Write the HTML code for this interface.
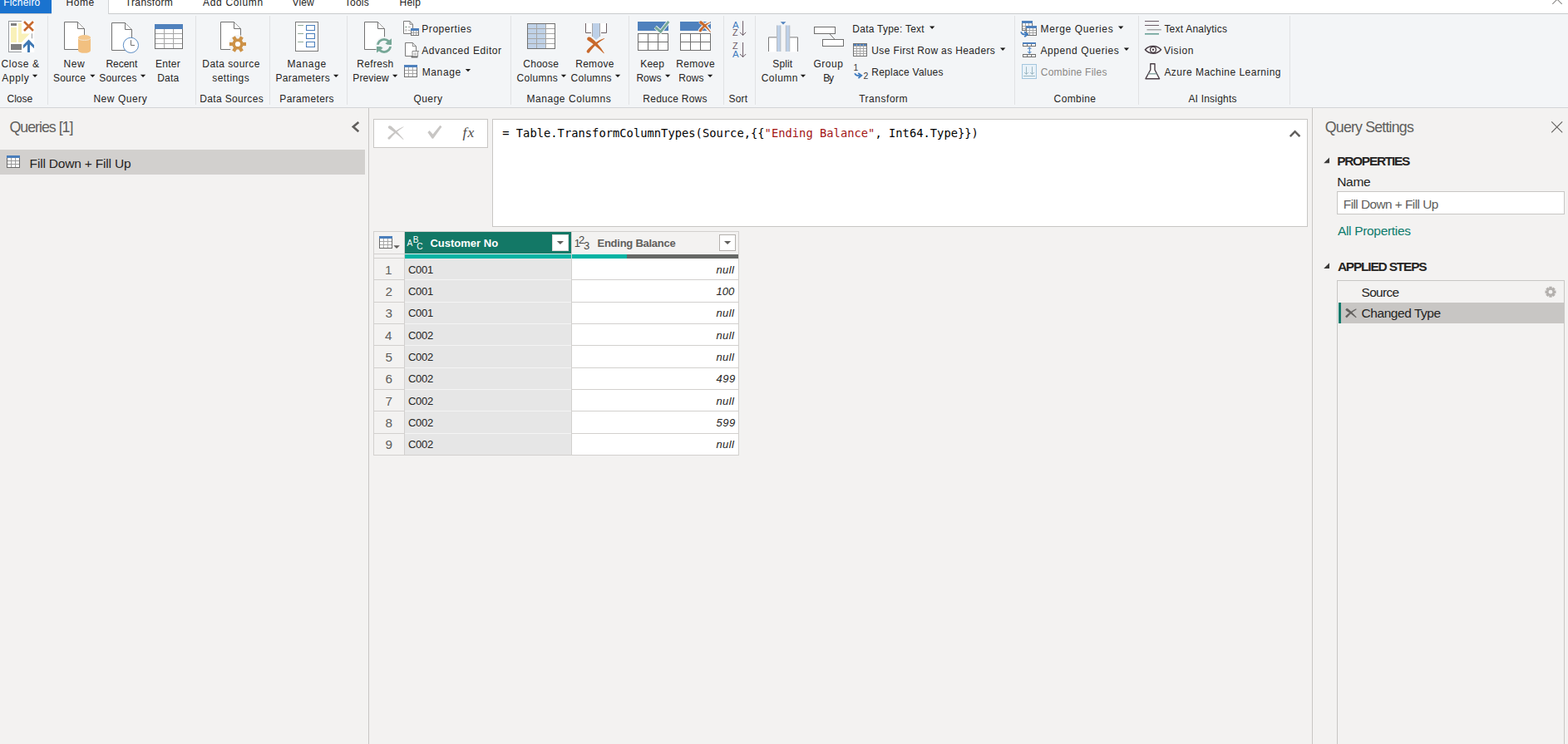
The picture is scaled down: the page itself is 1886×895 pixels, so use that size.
<!DOCTYPE html>
<html lang="en">
<head>
<meta charset="utf-8">
<title>Power Query Editor</title>
<style>
html,body{margin:0;padding:0;}
body{width:1886px;height:895px;overflow:hidden;background:#f3f2f1;font-family:"Liberation Sans",sans-serif;}
#app{position:relative;width:1886px;height:895px;overflow:hidden;background:#f3f2f1;}
.b{position:absolute;box-sizing:border-box;}
.t{position:absolute;white-space:pre;line-height:20px;height:20px;}
svg{position:absolute;overflow:visible;}
.sep{position:absolute;top:19px;width:1px;height:107px;background:#e1e2e4;}
.arr{position:absolute;width:0;height:0;border-left:3px solid transparent;border-right:3px solid transparent;border-top:3.4px solid #1b1a19;}
</style>
</head>
<body>
<div id="app">
<!-- tab strip -->
<div class="b" style="left:0;top:0;width:1886px;height:17px;background:#fff;border-bottom:1px solid #c9cbcd;"></div>
<div class="b" style="left:0;top:17px;width:1886px;height:113px;background:#f3f5f7;border-bottom:1px solid #d3d5d7;"></div>
<div class="b" style="left:0;top:0;width:62px;height:16px;background:#1a73cf;"></div>
<div class="b" style="left:62px;top:0;width:69px;height:17px;background:#f3f5f7;border-right:1px solid #d0d2d4;"></div>
<!-- group separators -->
<div class="sep" style="left:57px"></div>
<div class="sep" style="left:235px"></div>
<div class="sep" style="left:324px"></div>
<div class="sep" style="left:417px"></div>
<div class="sep" style="left:614px"></div>
<div class="sep" style="left:756px"></div>
<div class="sep" style="left:870px"></div>
<div class="sep" style="left:908px"></div>
<div class="sep" style="left:1220px"></div>
<div class="sep" style="left:1369px"></div>
<div class="sep" style="left:1551px"></div>
<!-- panels -->
<div class="b" style="left:443px;top:130px;width:1px;height:765px;background:#c8c6c4;"></div>
<div class="b" style="left:1578px;top:130px;width:1px;height:765px;background:#c8c6c4;"></div>
<div class="b" style="left:0;top:180px;width:439px;height:30px;background:#d2d0ce;"></div>
<!-- formula bar -->
<div class="b" style="left:449px;top:143px;width:138px;height:35px;background:#fff;border:1px solid #c8c6c4;"></div>
<div class="b" style="left:592px;top:143px;width:981px;height:130px;background:#fff;border:1px solid #c8c6c4;"></div>
<!-- right panel -->
<div class="b" style="left:1608px;top:230px;width:274px;height:28px;background:#fff;border:1px solid #c8c6c4;"></div>
<div class="b" style="left:1608px;top:337px;width:274px;height:600px;border:1px solid #c8c6c4;"></div>
<div class="b" style="left:1610px;top:364px;width:271.5px;height:25px;background:#c8c6c4;border-left:3px solid #0e7b6c;"></div>
<!-- data table -->
<div class="b" style="left:449px;top:278px;width:440px;height:270px;background:#d2d0ce;"></div>
<div class="b" style="left:450px;top:279px;width:36px;height:26px;background:#f3f2f1;"></div>
<div class="b" style="left:487px;top:279px;width:200px;height:26px;background:#137866;"></div>
<div class="b" style="left:688px;top:279px;width:200px;height:26px;background:#f3f2f1;"></div>
<div class="b" style="left:450px;top:306px;width:36px;height:4px;background:#f3f2f1;"></div>
<div class="b" style="left:487px;top:305px;width:200px;height:1px;background:#e8f1ef;"></div>
<div class="b" style="left:487px;top:306px;width:200px;height:5px;background:#01b3a3;"></div>
<div class="b" style="left:688px;top:305px;width:200px;height:1px;background:#f3f2f1;"></div>
<div class="b" style="left:688px;top:306px;width:66px;height:5px;background:#01b3a3;"></div>
<div class="b" style="left:754px;top:306px;width:134px;height:5px;background:#666866;"></div>
<div class="b" style="left:450px;top:311px;width:36px;height:25px;background:#f3f2f1;"></div>
<div class="b" style="left:487px;top:311px;width:200px;height:26px;background:#e6e6e6;border-bottom:1px solid #f4f4f4;"></div>
<div class="b" style="left:688px;top:311px;width:200px;height:25px;background:#fff;"></div>
<div class="b" style="left:450px;top:337px;width:36px;height:26px;background:#f3f2f1;"></div>
<div class="b" style="left:487px;top:337px;width:200px;height:27px;background:#e6e6e6;border-bottom:1px solid #f4f4f4;"></div>
<div class="b" style="left:688px;top:337px;width:200px;height:26px;background:#fff;"></div>
<div class="b" style="left:450px;top:364px;width:36px;height:25px;background:#f3f2f1;"></div>
<div class="b" style="left:487px;top:364px;width:200px;height:26px;background:#e6e6e6;border-bottom:1px solid #f4f4f4;"></div>
<div class="b" style="left:688px;top:364px;width:200px;height:25px;background:#fff;"></div>
<div class="b" style="left:450px;top:390px;width:36px;height:25px;background:#f3f2f1;"></div>
<div class="b" style="left:487px;top:390px;width:200px;height:26px;background:#e6e6e6;border-bottom:1px solid #f4f4f4;"></div>
<div class="b" style="left:688px;top:390px;width:200px;height:25px;background:#fff;"></div>
<div class="b" style="left:450px;top:416px;width:36px;height:26px;background:#f3f2f1;"></div>
<div class="b" style="left:487px;top:416px;width:200px;height:27px;background:#e6e6e6;border-bottom:1px solid #f4f4f4;"></div>
<div class="b" style="left:688px;top:416px;width:200px;height:26px;background:#fff;"></div>
<div class="b" style="left:450px;top:443px;width:36px;height:25px;background:#f3f2f1;"></div>
<div class="b" style="left:487px;top:443px;width:200px;height:26px;background:#e6e6e6;border-bottom:1px solid #f4f4f4;"></div>
<div class="b" style="left:688px;top:443px;width:200px;height:25px;background:#fff;"></div>
<div class="b" style="left:450px;top:469px;width:36px;height:25px;background:#f3f2f1;"></div>
<div class="b" style="left:487px;top:469px;width:200px;height:26px;background:#e6e6e6;border-bottom:1px solid #f4f4f4;"></div>
<div class="b" style="left:688px;top:469px;width:200px;height:25px;background:#fff;"></div>
<div class="b" style="left:450px;top:495px;width:36px;height:26px;background:#f3f2f1;"></div>
<div class="b" style="left:487px;top:495px;width:200px;height:27px;background:#e6e6e6;border-bottom:1px solid #f4f4f4;"></div>
<div class="b" style="left:688px;top:495px;width:200px;height:26px;background:#fff;"></div>
<div class="b" style="left:450px;top:522px;width:36px;height:25px;background:#f3f2f1;"></div>
<div class="b" style="left:487px;top:522px;width:200px;height:25px;background:#e6e6e6;border-bottom:0px solid #f4f4f4;"></div>
<div class="b" style="left:688px;top:522px;width:200px;height:25px;background:#fff;"></div>
<div class="b" style="left:664px;top:282px;width:20px;height:20px;background:#fff;border:1px solid #e3d9d9;"></div>
<div class="b" style="left:865px;top:282px;width:20px;height:20px;background:#fff;border:1px solid #b3b0ad;"></div>
<!-- dropdown arrows -->
<svg width="1886" height="895" viewBox="0 0 1886 895" style="left:0;top:0;">
<path d="M38.9 89.8 h6.3 l-3.15 3.3 Z" fill="#1b1a19"/>
<path d="M108.2 89.8 h6.3 l-3.15 3.3 Z" fill="#1b1a19"/>
<path d="M168.9 89.8 h6.3 l-3.15 3.3 Z" fill="#1b1a19"/>
<path d="M401.0 89.8 h6.3 l-3.15 3.3 Z" fill="#1b1a19"/>
<path d="M472.0 89.8 h6.3 l-3.15 3.3 Z" fill="#1b1a19"/>
<path d="M559.8 83.0 h6.3 l-3.15 3.3 Z" fill="#1b1a19"/>
<path d="M674.8 89.8 h6.3 l-3.15 3.3 Z" fill="#1b1a19"/>
<path d="M739.9 89.8 h6.3 l-3.15 3.3 Z" fill="#1b1a19"/>
<path d="M800.0 89.8 h6.3 l-3.15 3.3 Z" fill="#1b1a19"/>
<path d="M851.0 89.8 h6.3 l-3.15 3.3 Z" fill="#1b1a19"/>
<path d="M962.8 89.8 h6.3 l-3.15 3.3 Z" fill="#1b1a19"/>
<path d="M1118.0 31.6 h6.3 l-3.15 3.3 Z" fill="#1b1a19"/>
<path d="M1203.0 57.6 h6.3 l-3.15 3.3 Z" fill="#1b1a19"/>
<path d="M1345.0 31.6 h6.3 l-3.15 3.3 Z" fill="#1b1a19"/>
<path d="M1351.8 57.6 h6.3 l-3.15 3.3 Z" fill="#1b1a19"/>
<path d="M473.3 295.3 h7.6 l-3.80 3.7 Z" fill="#605e5c"/>
<path d="M669.8 290.0 h8.2 l-4.10 4.1 Z" fill="#605e5c"/>
<path d="M871.0 290.0 h8.2 l-4.10 4.1 Z" fill="#605e5c"/>
</svg>
<!-- table header arrows -->
<!-- table corner icon -->
<svg width="20" height="18" style="left:455px;top:283px" viewBox="455 283 20 18" shape-rendering="crispEdges">
  <rect x="456" y="284" width="16" height="15" fill="#fff"/>
  <rect x="456" y="284" width="16" height="3" fill="#4a7ebb"/>
  <path d="M461.500 287 V298 M466.500 287 V298 M457 290.500 H471 M457 294.500 H471" stroke="#a6a6a6" stroke-width="1"/>
  <path d="M456.500 287 V298.500 H471.500 V287" stroke="#6a6a6a" stroke-width="1" fill="none"/>
</svg>
<!-- formula text -->
<div class="t" style="left:604.2px;top:150.3px;font-family:'DejaVu Sans Mono','Liberation Mono',monospace;font-size:13.75px;letter-spacing:0.022px;color:#000;">= Table.TransformColumnTypes(Source,{{<span style="color:#a31515">"Ending Balance"</span>, Int64.Type}})</div>
<!-- ICONS overlay -->
<svg width="1886" height="895" viewBox="0 0 1886 895" style="left:0;top:0;">
<!-- top right chevron -->
<path d="M1867.3 4.8 L1873 -0.8 L1878.7 4.8" fill="none" stroke="#8a8886" stroke-width="1.1"/>

<!-- Close & Apply -->
<g>
  <rect x="10.5" y="25.5" width="30" height="37" fill="#fff" stroke="#979b9f" stroke-width="1"/>
  <rect x="13" y="28" width="7" height="3" fill="#808080"/>
  <rect x="13" y="33" width="7" height="18" fill="#f9f1b9"/>
  <path d="M22 28 H36.3 V40.5 L26.5 51 H22 Z" fill="#f9f1b9"/>
  <rect x="13" y="53" width="13" height="7" fill="#808080"/>
  <rect x="26" y="25" width="15.3" height="15.5" fill="#fff"/>
  <path d="M26 63 V51 L36.3 40 H41.3 V63 Z" fill="#fff"/>
  <path d="M38.4 40.3 V46.3" stroke="#979b9f" stroke-width="1" fill="none"/>
  <path d="M29 26 L40 37 M40 26 L29 37" stroke="#c7692f" stroke-width="2.6" fill="none"/>
  <path d="M33 63 V53.5 L28 58.2 V54.2 L34.5 47.6 L41 54.2 V58.2 L36 53.5 V63 Z" fill="#3e78b4"/>
</g>

<!-- New Source -->
<g>
  <path d="M93.5 26.5 H77.5 V59.5 H101.5 V34.5" fill="#fff" stroke="#727272" stroke-width="1"/>
  <path d="M93.5 26.5 L101.5 34.5" fill="none" stroke="#7d7d7d" stroke-width="0.75"/>
  <path d="M93.5 26.5 V34.5 H101.5" fill="none" stroke="#727272" stroke-width="1"/>
  <path d="M94 45 V60.8 A7.5 3 0 0 0 109 60.8 V45 Z" fill="#f2c080"/>
  <ellipse cx="101.5" cy="45" rx="7.5" ry="3" fill="#f4c88e"/>
  <path d="M94.3 46.2 A7.3 2.6 0 0 0 108.7 46.2" fill="none" stroke="#f3ede4" stroke-width="0.9"/>
</g>

<!-- Recent Sources -->
<g>
  <path d="M150.5 27.5 H134.5 V60.5 H158.5 V35.5" fill="#fff" stroke="#727272" stroke-width="1"/>
  <path d="M150.5 27.5 L158.5 35.5" fill="none" stroke="#7d7d7d" stroke-width="0.75"/>
  <path d="M150.5 27.5 V35.5 H158.5" fill="none" stroke="#727272" stroke-width="1"/>
  <circle cx="157.4" cy="54.4" r="9.1" fill="#fff" stroke="#4a80bd" stroke-width="0.9"/>
  <path d="M157.5 48.2 V54.5 H162" fill="none" stroke="#727272" stroke-width="1"/>
</g>

<!-- Enter Data -->
<g shape-rendering="crispEdges">
  <rect x="186" y="29" width="34" height="30" fill="#fff"/>
  <rect x="186" y="29" width="34" height="6" fill="#4f81bd"/>
  <path d="M187 40.5 H219 M187 46.5 H219 M187 52.5 H219 M197.5 35 V58 M208.5 35 V58" stroke="#a6a6a6" stroke-width="1" fill="none"/>
  <path d="M186.5 35 V58.5 H219.5 V35" stroke="#6e6e6e" stroke-width="1" fill="none"/>
</g>

<!-- Data source settings -->
<g>
  <path d="M281.5 26.5 H265.5 V59.5 H289.5 V34.5" fill="#fff" stroke="#727272" stroke-width="1"/>
  <path d="M281.5 26.5 L289.5 34.5" fill="none" stroke="#7d7d7d" stroke-width="0.75"/>
  <path d="M281.5 26.5 V34.5 H289.5" fill="none" stroke="#727272" stroke-width="1"/>
  <circle cx="286" cy="53" r="11" fill="#f3f5f7"/>
  <rect x="275" y="42" width="15" height="18" fill="none"/>
  <g transform="translate(286 53)" fill="#cd9247">
    <circle r="6.6"/>
    <rect x="-2.1" y="-10" width="4.2" height="20" transform="rotate(30)"/>
    <rect x="-2.1" y="-10" width="4.2" height="20" transform="rotate(90)"/>
    <rect x="-2.1" y="-10" width="4.2" height="20" transform="rotate(150)"/>
    <circle r="3.1" fill="#fff"/>
  </g>
</g>

<!-- Manage Parameters -->
<g>
  <rect x="355.5" y="26.5" width="27" height="35" fill="#fff" stroke="#7a7a7a" stroke-width="1"/>
  <path d="M358.2 30.5 H365 M358.2 40.5 H365 M358.2 50.5 H365" stroke="#8fa898" stroke-width="1" fill="none"/>
  <rect x="368.5" y="30.5" width="10" height="6" fill="#fff" stroke="#4a7ebb" stroke-width="1"/>
  <rect x="368.5" y="40.5" width="10" height="6" fill="#fff" stroke="#4a7ebb" stroke-width="1"/>
  <rect x="368.5" y="50.5" width="10" height="6" fill="#fff" stroke="#4a7ebb" stroke-width="1"/>
</g>

<!-- Refresh Preview -->
<g>
  <path d="M454.5 26.5 H438.5 V59.5 H462.5 V34.5" fill="#fff" stroke="#727272" stroke-width="1"/>
  <path d="M454.5 26.5 L462.5 34.5" fill="none" stroke="#7d7d7d" stroke-width="0.75"/>
  <path d="M454.5 26.5 V34.5 H462.5" fill="none" stroke="#727272" stroke-width="1"/>
  <circle cx="462" cy="54.9" r="10.6" fill="#f3f5f7"/>
  <clipPath id="rt"><rect x="450" y="40" width="25" height="13.8"/></clipPath>
  <clipPath id="rb"><rect x="450" y="56.1" width="25" height="13.8"/></clipPath>
  <circle cx="462" cy="54.95" r="7.65" fill="none" stroke="#76a797" stroke-width="2.8" clip-path="url(#rt)"/>
  <circle cx="462" cy="54.95" r="7.65" fill="none" stroke="#76a797" stroke-width="2.8" clip-path="url(#rb)"/>
  <path d="M471 46.3 V53.8 H466 L463.4 52.2 Z" fill="#76a797"/>
  <path d="M453 63.4 V56.1 H458 L460.6 57.7 Z" fill="#76a797"/>
</g>
<!-- Properties (small) -->
<g>
  <path d="M485.5 25.5 H493 L496.5 29.3 V40.5 H485.5 Z" fill="#fff" stroke="#7a7a7a" stroke-width="1"/>
  <path d="M493 25.5 V29.3 H496.5" fill="none" stroke="#7a7a7a" stroke-width="0.9"/>
  <circle cx="488.4" cy="32.5" r="1.1" fill="#8fa898"/>
  <circle cx="488.4" cy="36.4" r="0.9" fill="none" stroke="#8a8a8a" stroke-width="0.6"/>
  <path d="M491 32.5 H493.6 M491 36.4 H493.6" stroke="#8a8a8a" stroke-width="0.8"/>
  <g shape-rendering="crispEdges">
    <rect x="494" y="34" width="10" height="9" fill="#fff"/>
    <rect x="494" y="34" width="10" height="3" fill="#4f81bd"/>
    <path d="M497.5 37 V43 M500.5 37 V43 M494 39.5 H504" stroke="#a6a6a6" stroke-width="1"/>
    <path d="M494.5 37 V42.5 H503.5 V37" stroke="#707070" stroke-width="1" fill="none"/>
  </g>
</g>
<!-- Advanced Editor -->
<g>
  <path d="M487.5 51.5 H496.3 L500.5 55.7 V67.5 H487.5 Z" fill="#fff" stroke="#7a7a7a" stroke-width="1"/>
  <path d="M496.3 51.5 V55.7 H500.5" fill="none" stroke="#7a7a7a" stroke-width="0.9"/>
  <path d="M496 61.5 H503.6 L502.4 63 V68 H496 Z" fill="#fff" stroke="#7a7a7a" stroke-width="0.9"/>
  <path d="M497.5 64 H501 M497.5 65.8 H501" stroke="#8a8a8a" stroke-width="0.7"/>
  <rect x="494.6" y="67.6" width="7.8" height="1.9" fill="#6d6d6d"/>
</g>
<!-- Manage (small table) -->
<g shape-rendering="crispEdges">
  <rect x="486" y="78" width="16" height="15" fill="#fff"/>
  <rect x="486" y="78" width="16" height="3" fill="#4f81bd"/>
  <path d="M491.5 81 V92 M496.5 81 V92 M487 84.5 H501 M487 88.5 H501" stroke="#a6a6a6" stroke-width="1"/>
  <path d="M486.5 81 V92.5 H501.5 V81" stroke="#707070" stroke-width="1" fill="none"/>
</g>

<!-- Choose Columns -->
<g shape-rendering="crispEdges">
  <rect x="634" y="28" width="34" height="31" fill="#fff"/>
  <rect x="634" y="28" width="22" height="31" fill="#c0d2e8"/>
  <path d="M645.5 29 V58 M656.5 29 V58 M635 34.5 H667 M635 40.5 H667 M635 46.5 H667 M635 52.5 H667" stroke="#a6a6a6" stroke-width="1"/>
  <rect x="634.5" y="28.5" width="33" height="30" fill="none" stroke="#707070" stroke-width="1"/>
</g>

<!-- Remove Columns -->
<g>
  <rect x="704.5" y="28" width="25" height="11.5" fill="#fff"/>
  <path d="M704.5 28 V39.5 H711 M723 39.5 H729.5 V28" fill="none" stroke="#6e6266" stroke-width="1"/>
  <path d="M712.5 28 H721.5 V44 L717 48 L712.5 44 Z" fill="#bdd0e8"/>
  <path d="M712.5 28 V44 M721.5 28 V44" stroke="#a8a8a8" stroke-width="1" fill="none"/>
  <path d="M706.2 46.4 C706.6 44.4 709 43.9 710.8 45.2 C717 50 722 56 726.8 63.9 L726.2 64.2 C720 58 713.5 52.6 707 48.4 C706.2 47.9 706 47.1 706.2 46.4 Z" fill="#c8692c"/>
  <path d="M727 46 C719.5 48 711 54.5 705.8 61 C705.2 62.8 706.6 64.4 708.6 63.6 C713 56.8 719.8 50.8 727.2 46.5 Z" fill="#c8692c"/>
</g>

<!-- Keep Rows -->
<g>
  <g shape-rendering="crispEdges">
    <rect x="767" y="26" width="37" height="11" fill="#4f81bd"/>
    <rect x="767" y="40" width="37" height="21" fill="#fff"/>
    <path d="M779.5 41 V60 M791.5 41 V60 M768 50.5 H803" stroke="#707070" stroke-width="1"/>
    <rect x="767.5" y="40.5" width="36" height="20" fill="none" stroke="#707070" stroke-width="1"/>
  </g>
  <path d="M788.2 32.6 L794.6 38.2 L804.3 25.8" fill="none" stroke="#f3f5f7" stroke-width="4.6"/>
  <path d="M788.2 32.6 L794.6 38.2 L804.3 25.8" fill="none" stroke="#76a797" stroke-width="2.8"/>
</g>

<!-- Remove Rows -->
<g>
  <g shape-rendering="crispEdges">
    <rect x="818" y="26" width="37" height="11" fill="#4f81bd"/>
    <rect x="818" y="40" width="37" height="21" fill="#fff"/>
    <path d="M830.5 41 V60 M842.5 41 V60 M819 50.5 H854" stroke="#707070" stroke-width="1"/>
    <rect x="818.5" y="40.5" width="36" height="20" fill="none" stroke="#707070" stroke-width="1"/>
  </g>
  <path d="M841.6 25.8 C846 29 851 33.5 854.6 38.5 M854 26.6 C849 29 844.5 33 841.2 37.6" fill="none" stroke="#f3f5f7" stroke-width="4.4"/>
  <path d="M841.2 26.8 C841.6 25.2 843.4 24.9 844.6 25.9 C848.6 29.2 852 33.4 855 38.6 L854.5 38.9 C850.5 34.6 846.4 31.2 842 28.5 C841.3 28.1 841.1 27.4 841.2 26.8 Z" fill="#c8692c"/>
  <path d="M854.2 26.4 C849 27.8 843.8 32 840.8 36.2 C840.4 37.8 841.8 38.9 843.2 38.2 C846 33.8 849.8 29.8 854.4 26.9 Z" fill="#c8692c"/>
</g>

<!-- Sort arrows -->
<g fill="none" stroke="#6b5b66" stroke-width="1">
  <path d="M893.6 25.2 V42.4 M890 38.8 L893.6 42.5 L897.2 38.8"/>
  <path d="M893.6 51 V68.6 M890 65 L893.6 68.7 L897.2 65"/>
</g>

<!-- Split Column -->
<g>
  <path d="M938.7 26.2 H945.4 L942.05 29.6 Z" fill="#4f81bd"/>
  <rect x="924.5" y="44.5" width="10" height="18" fill="#fff"/>
  <rect x="950" y="44.5" width="9.5" height="18" fill="#fff"/>
  <path d="M924.5 62 V44.9 H934" fill="none" stroke="#7a7a7a" stroke-width="1"/>
  <path d="M950 44.9 H959.5 V62" fill="none" stroke="#7a7a7a" stroke-width="1"/>
  <rect x="934.5" y="30.5" width="4.4" height="31.5" fill="#bdd0e8"/>
  <rect x="945.2" y="30.5" width="4.6" height="31.5" fill="#bdd0e8"/>
  <path d="M934.5 30.5 V62 M938.9 30.5 V62 M945.3 30.5 V62 M949.8 30.5 V62" stroke="#b4b8bc" stroke-width="0.9" fill="none"/>
</g>

<!-- Group By -->
<g>
  <rect x="979.5" y="32.5" width="25" height="8" fill="#fff" stroke="#6e6e6e" stroke-width="1"/>
  <rect x="989.5" y="47.5" width="25" height="8" fill="#fff" stroke="#6e6e6e" stroke-width="1"/>
  <path d="M998 40.8 L1004 47.3" stroke="#6e6e6e" stroke-width="1" fill="none"/>
</g>

<!-- Use First Row as Headers -->
<g shape-rendering="crispEdges">
  <rect x="1026" y="52" width="17" height="16" fill="#fff"/>
  <rect x="1027" y="53" width="15" height="3" fill="#4f81bd"/>
  <path d="M1030.5 53 V67 M1034.5 53 V67 M1038.5 53 V67 M1027 55.5 H1042 M1027 58.5 H1042 M1027 61.5 H1042 M1027 64.5 H1042" stroke="#a6a6a6" stroke-width="1"/>
  <rect x="1026.5" y="52.5" width="16" height="15" fill="none" stroke="#707070" stroke-width="1"/>
</g>

<!-- Replace Values arrow -->
<g>
  <path d="M1028.3 88.2 C1028.6 90.6 1030.5 91.3 1034.8 91" fill="none" stroke="#3e7bbf" stroke-width="1.8"/>
  <path d="M1032.2 87.9 L1036.3 90.9 L1032.4 94" fill="none" stroke="#3e7bbf" stroke-width="1.8"/>
</g>
<!-- Merge Queries -->
<g>
  <g shape-rendering="crispEdges">
    <rect x="1229" y="25" width="13" height="12" fill="#fff"/>
    <rect x="1229" y="25" width="13" height="3" fill="#4f81bd"/>
    <path d="M1233.5 28 V36 M1237.5 28 V31 M1230 31.5 H1234 M1230 34.5 H1234" stroke="#a6a6a6" stroke-width="1"/>
    <path d="M1229.5 28 V36.5 H1234 M1241.5 28 V31" stroke="#707070" stroke-width="1" fill="none"/>
    <rect x="1234" y="31" width="13" height="12" fill="#fff"/>
    <rect x="1234" y="31" width="13" height="3" fill="#4f81bd"/>
    <path d="M1238.5 34 V42 M1242.5 34 V42 M1235 36.5 H1246 M1235 39.5 H1246" stroke="#a6a6a6" stroke-width="1"/>
    <path d="M1234.500 34 V42.5 H1246.5 V34" stroke="#707070" stroke-width="1" fill="none"/>
  </g>
  <path d="M1228.3 38.2 C1228.4 40.8 1230.3 41.6 1234.4 41.3" fill="none" stroke="#3e7bbf" stroke-width="1.9"/>
  <path d="M1232 38.2 L1236 41.2 L1232.2 44.2" fill="none" stroke="#3e7bbf" stroke-width="1.9"/>
</g>
<!-- Append Queries -->
<g>
  <g shape-rendering="crispEdges">
    <rect x="1230" y="51" width="16" height="5" fill="#fff"/>
    <rect x="1230" y="51" width="16" height="2" fill="#4f81bd"/>
    <path d="M1235.5 53 V55 M1240.5 53 V55" stroke="#707070" stroke-width="1"/>
    <path d="M1230.5 53 V55.5 H1245.500 V53" stroke="#707070" stroke-width="1" fill="none"/>
    <rect x="1230.5" y="65.5" width="15" height="3" fill="#fff" stroke="#707070" stroke-width="1"/>
    <path d="M1235.500 65 V69 M1240.500 65 V69" stroke="#707070" stroke-width="1"/>
  </g>
  <path d="M1238.3 57 V64 M1236.2 59 L1238.3 56.8 L1240.4 59 M1236.2 62 L1238.3 64.3 L1240.4 62" fill="none" stroke="#3e7bbf" stroke-width="1"/>
</g>
<!-- Combine Files -->
<g>
  <rect x="1229.500" y="77.5" width="17" height="17" fill="#e9f2f9" stroke="#a3c6de" stroke-width="1"/>
  <path d="M1234.5 80.3 V89.4 M1232.200 87 L1234.5 89.5 L1236.800 87 M1241.5 80.3 V89.4 M1239.200 87 L1241.5 89.5 L1243.800 87 M1231 91.5 H1245" fill="none" stroke="#9bb7c2" stroke-width="1"/>
</g>
<!-- Text Analytics -->
<g fill="none">
  <path d="M1377 25.5 H1394" stroke="#6b5b66" stroke-width="1"/>
  <path d="M1377 30.5 H1394" stroke="#6b5b66" stroke-width="1"/>
  <path d="M1379.5 35.8 H1396.8" stroke="#8a8a8a" stroke-width="1.1"/>
  <path d="M1377 40.8 H1394" stroke="#6fa39a" stroke-width="1.7"/>
</g>
<!-- Vision -->
<g>
  <path d="M1377.500 59.8 C1382 54 1392 54 1396.400 59.8 C1392 65.6 1382 65.6 1377.500 59.8 Z" fill="#fff" stroke="#4a3f47" stroke-width="1.6"/>
  <circle cx="1387" cy="59.8" r="3.5" fill="#fff" stroke="#4a3f47" stroke-width="1.4"/>
  <circle cx="1387" cy="59.8" r="1.200" fill="#4a3f47"/>
</g>
<!-- Azure ML flask -->
<g>
  <path d="M1383.800 76.800 H1389 V84 L1394.600 94.700 H1378 L1383.800 84 Z" fill="#fff" stroke="#4a3f47" stroke-width="1.400" stroke-linejoin="round"/>
  <path d="M1381.200 88.8 H1391.500" stroke="#7a9a98" stroke-width="1.300"/>
</g>

<!-- left panel: collapse chevron -->
<path d="M431.300 146.900 L424.800 152.500 L431.300 158.200" fill="none" stroke="#605e5c" stroke-width="2.600"/>
<!-- query table icon -->
<g shape-rendering="crispEdges">
  <rect x="8" y="187" width="16" height="15" fill="#fff"/>
  <rect x="8" y="187" width="16" height="3" fill="#4a7ebb"/>
  <path d="M13.500 190 V201 M18.500 190 V201 M9 193.500 H23 M9 197.500 H23" stroke="#9a9a9a" stroke-width="1"/>
  <path d="M8.500 190 V201.500 H23.500 V190" stroke="#6a6a6a" stroke-width="1" fill="none"/>
</g>

<!-- formula buttons -->
<path d="M466.9 152.6 C467.4 151.1 469.3 150.7 470.6 151.8 C476 156.5 481 162 485.5 167.6 L485 168 C479.5 163 473.5 158.4 467.6 154.5 C466.9 154 466.7 153.2 466.900 152.600 Z" fill="#c8c6c4"/>
<path d="M485.3 152.2 C478.500 155 472 160.300 466.500 165.500 C466 167 467.300 168.200 468.800 167.600 C473.200 162 479 156.600 485.500 152.700 Z" fill="#c8c6c4"/>
<path d="M514.4 159.3 L516.6 157.1 L520.6 161.5 L529.4 150.8 L531.400 152.500 L521.100 166.800 H519.700 Z" fill="#c8c6c4"/>
<!-- formula expand chevron -->
<path d="M1551.800 164.200 L1557.600 158.200 L1563.400 164.200" fill="none" stroke="#605e5c" stroke-width="2.500"/>

<!-- right panel close X -->
<path d="M1866.200 146.300 L1879.200 159.300 M1879.200 146.300 L1866.200 159.300" stroke="#605e5c" stroke-width="1.100" fill="none"/>
<!-- section triangles -->
<path d="M1599 189.500 V196.300 H1592.200 Z" fill="#3b3a39"/>
<path d="M1599 316.200 V323 H1592.200 Z" fill="#3b3a39"/>
<!-- gear -->
<g transform="translate(1865 351.2)" fill="#b3b0ad">
  <circle r="4.700"/>
  <rect x="-1.700" y="-6.500" width="3.400" height="13"/>
  <rect x="-1.700" y="-6.500" width="3.400" height="13" transform="rotate(45)"/>
  <rect x="-1.700" y="-6.500" width="3.400" height="13" transform="rotate(90)"/>
  <rect x="-1.700" y="-6.500" width="3.400" height="13" transform="rotate(135)"/>
  <circle r="2.400" fill="#f3f2f1"/>
</g>
<!-- step delete X -->
<path d="M1618.800 372.300 C1619.100 371.300 1620.400 371 1621.300 371.700 C1625 374.600 1628.300 378 1631.300 381.600 L1630.900 381.900 C1627.200 378.700 1623.300 375.900 1619.300 373.500 C1618.800 373.200 1618.700 372.700 1618.800 372.300 Z" fill="#605e5c" stroke="#605e5c" stroke-width="0.600" stroke-linejoin="round"/>
<path d="M1631.100 371.800 C1626.600 373.700 1622.300 377 1618.700 380.300 C1618.400 381.300 1619.300 382.100 1620.300 381.700 C1623.200 378.100 1626.900 374.600 1631.300 372.200 Z" fill="#605e5c" stroke="#605e5c" stroke-width="0.600" stroke-linejoin="round"/>
</svg>

<!-- text -->
<span class="t" style='left:4.20px;top:-7px;font-size:12px;letter-spacing:0.199px;color:#ffffff;'>Ficheiro</span>
<span class="t" style='left:79.50px;top:-7px;font-size:12px;letter-spacing:0.521px;color:#252423;'>Home</span>
<span class="t" style='left:150.80px;top:-7px;font-size:12px;letter-spacing:0.346px;color:#252423;'>Transform</span>
<span class="t" style='left:244.00px;top:-7px;font-size:12px;letter-spacing:0.682px;color:#252423;'>Add Column</span>
<span class="t" style='left:351.60px;top:-7px;font-size:12px;letter-spacing:0.091px;color:#252423;'>View</span>
<span class="t" style='left:414.80px;top:-7px;font-size:12px;letter-spacing:0.222px;color:#252423;'>Tools</span>
<span class="t" style='left:480.60px;top:-7px;font-size:12px;letter-spacing:0.198px;color:#252423;'>Help</span>
<span class="t" style='left:1.50px;top:67px;font-size:12px;letter-spacing:0.581px;color:#252423;'>Close &amp;</span>
<span class="t" style='left:2.30px;top:84px;font-size:12px;letter-spacing:0.596px;color:#252423;'>Apply</span>
<span class="t" style='left:8.60px;top:109px;font-size:12px;letter-spacing:-0.026px;color:#252423;'>Close</span>
<span class="t" style='left:76.50px;top:67px;font-size:12px;letter-spacing:0.630px;color:#252423;'>New</span>
<span class="t" style='left:64.10px;top:84px;font-size:12px;letter-spacing:0.170px;color:#252423;'>Source</span>
<span class="t" style='left:127.50px;top:67px;font-size:12px;letter-spacing:-0.057px;color:#252423;'>Recent</span>
<span class="t" style='left:119.20px;top:84px;font-size:12px;letter-spacing:0.196px;color:#252423;'>Sources</span>
<span class="t" style='left:187.00px;top:67px;font-size:12px;letter-spacing:0.254px;color:#252423;'>Enter</span>
<span class="t" style='left:189.30px;top:84px;font-size:12px;letter-spacing:0.142px;color:#252423;'>Data</span>
<span class="t" style='left:112.40px;top:109px;font-size:12px;letter-spacing:0.548px;color:#252423;'>New Query</span>
<span class="t" style='left:243.30px;top:67px;font-size:12px;letter-spacing:0.437px;color:#252423;'>Data source</span>
<span class="t" style='left:255.30px;top:84px;font-size:12px;letter-spacing:0.435px;color:#252423;'>settings</span>
<span class="t" style='left:240.30px;top:109px;font-size:12px;letter-spacing:0.336px;color:#252423;'>Data Sources</span>
<span class="t" style='left:345.40px;top:67px;font-size:12px;letter-spacing:0.702px;color:#252423;'>Manage</span>
<span class="t" style='left:331.40px;top:84px;font-size:12px;letter-spacing:0.364px;color:#252423;'>Parameters</span>
<span class="t" style='left:336.30px;top:109px;font-size:12px;letter-spacing:0.364px;color:#252423;'>Parameters</span>
<span class="t" style='left:429.30px;top:67px;font-size:12px;letter-spacing:0.326px;color:#252423;'>Refresh</span>
<span class="t" style='left:424.30px;top:84px;font-size:12px;letter-spacing:0.114px;color:#252423;'>Preview</span>
<span class="t" style='left:507.30px;top:25px;font-size:12px;letter-spacing:0.545px;color:#252423;'>Properties</span>
<span class="t" style='left:507.30px;top:51px;font-size:12px;letter-spacing:0.546px;color:#252423;'>Advanced Editor</span>
<span class="t" style='left:507.70px;top:77px;font-size:12px;letter-spacing:0.622px;color:#252423;'>Manage</span>
<span class="t" style='left:497.50px;top:109px;font-size:12px;letter-spacing:0.431px;color:#252423;'>Query</span>
<span class="t" style='left:629.30px;top:67px;font-size:12px;letter-spacing:0.263px;color:#252423;'>Choose</span>
<span class="t" style='left:621.60px;top:84px;font-size:12px;letter-spacing:0.308px;color:#252423;'>Columns</span>
<span class="t" style='left:692.20px;top:67px;font-size:12px;letter-spacing:0.298px;color:#252423;'>Remove</span>
<span class="t" style='left:686.60px;top:84px;font-size:12px;letter-spacing:0.275px;color:#252423;'>Columns</span>
<span class="t" style='left:633.40px;top:109px;font-size:12px;letter-spacing:0.558px;color:#252423;'>Manage Columns</span>
<span class="t" style='left:770.20px;top:67px;font-size:12px;letter-spacing:0.249px;color:#252423;'>Keep</span>
<span class="t" style='left:765.40px;top:84px;font-size:12px;letter-spacing:0.031px;color:#252423;'>Rows</span>
<span class="t" style='left:813.30px;top:67px;font-size:12px;letter-spacing:0.318px;color:#252423;'>Remove</span>
<span class="t" style='left:816.30px;top:84px;font-size:12px;letter-spacing:0.065px;color:#252423;'>Rows</span>
<span class="t" style='left:773.30px;top:109px;font-size:12px;letter-spacing:0.250px;color:#252423;'>Reduce Rows</span>
<span class="t" style='left:876.50px;top:109px;font-size:12px;letter-spacing:0.209px;color:#252423;'>Sort</span>
<span class="t" style='left:929.30px;top:67px;font-size:12px;letter-spacing:0.123px;color:#252423;'>Split</span>
<span class="t" style='left:915.70px;top:84px;font-size:12px;letter-spacing:0.485px;color:#252423;'>Column</span>
<span class="t" style='left:978.40px;top:67px;font-size:12px;letter-spacing:0.531px;color:#252423;'>Group</span>
<span class="t" style='left:990.30px;top:84px;font-size:12px;letter-spacing:-1.404px;color:#252423;'>By</span>
<span class="t" style='left:1025.30px;top:25px;font-size:12px;letter-spacing:0.247px;color:#252423;'>Data Type: Text</span>
<span class="t" style='left:1048.30px;top:51px;font-size:12px;letter-spacing:0.368px;color:#252423;'>Use First Row as Headers</span>
<span class="t" style='left:1048.30px;top:77px;font-size:12px;letter-spacing:0.234px;color:#252423;'>Replace Values</span>
<span class="t" style='left:1033.20px;top:109px;font-size:12px;letter-spacing:0.521px;color:#252423;'>Transform</span>
<span class="t" style='left:1251.50px;top:25px;font-size:12px;letter-spacing:0.653px;color:#252423;'>Merge Queries</span>
<span class="t" style='left:1251.50px;top:51px;font-size:12px;letter-spacing:0.575px;color:#252423;'>Append Queries</span>
<span class="t" style='left:1251.80px;top:77px;font-size:12px;letter-spacing:0.242px;color:#8a8886;'>Combine Files</span>
<span class="t" style='left:1267.60px;top:109px;font-size:12px;letter-spacing:0.392px;color:#252423;'>Combine</span>
<span class="t" style='left:1400.40px;top:25px;font-size:12px;letter-spacing:0.219px;color:#252423;'>Text Analytics</span>
<span class="t" style='left:1400.00px;top:51px;font-size:12px;letter-spacing:0.581px;color:#252423;'>Vision</span>
<span class="t" style='left:1400.40px;top:77px;font-size:12px;letter-spacing:0.476px;color:#252423;'>Azure Machine Learning</span>
<span class="t" style='left:1429.40px;top:109px;font-size:12px;letter-spacing:0.207px;color:#252423;'>AI Insights</span>
<span class="t" style='left:11.50px;top:143px;font-size:17.8px;letter-spacing:-1.003px;color:#605e5c;'>Queries [1]</span>
<span class="t" style='left:35.60px;top:187px;font-size:15.5px;letter-spacing:-0.183px;color:#252423;'>Fill Down + Fill Up</span>
<span class="t" style='left:1593.80px;top:143px;font-size:17.8px;letter-spacing:-0.817px;color:#605e5c;'>Query Settings</span>
<span class="t" style='left:1608.20px;top:184px;font-size:15.5px;letter-spacing:-1.308px;color:#252423;font-weight:700;'>PROPERTIES</span>
<span class="t" style='left:1608.20px;top:209px;font-size:15.5px;letter-spacing:-0.275px;color:#252423;'>Name</span>
<span class="t" style='left:1615.80px;top:236px;font-size:15.4px;letter-spacing:-0.554px;color:#605e5c;'>Fill Down + Fill Up</span>
<span class="t" style='left:1608.90px;top:268px;font-size:15.5px;letter-spacing:-0.317px;color:#0e7b6c;'>All Properties</span>
<span class="t" style='left:1608.90px;top:311px;font-size:15.5px;letter-spacing:-1.214px;color:#252423;font-weight:700;'>APPLIED STEPS</span>
<span class="t" style='left:1637.60px;top:342px;font-size:15.5px;letter-spacing:-0.718px;color:#252423;'>Source</span>
<span class="t" style='left:1637.60px;top:367px;font-size:15.5px;letter-spacing:-0.455px;color:#252423;'>Changed Type</span>
<span class="t" style='left:517.40px;top:283px;font-size:13px;letter-spacing:0.012px;color:#ffffff;font-weight:700;'>Customer No</span>
<span class="t" style='left:718.50px;top:283px;font-size:13px;letter-spacing:-0.253px;color:#605e5c;font-weight:700;'>Ending Balance</span>
<span class="t" style='left:489.40px;top:283px;font-size:10.2px;color:#ffffff;'>A</span>
<span class="t" style='left:496.70px;top:279px;font-size:10.2px;color:#ffffff;'>B</span>
<span class="t" style='left:501.30px;top:287px;font-size:10.2px;color:#ffffff;'>C</span>
<span class="t" style='left:690.80px;top:283px;font-size:13px;color:#484644;'>1</span>
<span class="t" style='left:696.00px;top:279px;font-size:13px;color:#484644;'>2</span>
<span class="t" style='left:702.00px;top:286px;font-size:13px;color:#484644;'>3</span>
<span class="t" style='left:463.00px;top:315px;font-size:15.3px;color:#605e5c;'>1</span>
<span class="t" style='left:490.90px;top:315px;font-size:13px;letter-spacing:-0.283px;color:#252423;'>C001</span>
<span class="t" style='left:861.50px;top:315px;font-size:13px;letter-spacing:0.351px;color:#252423;font-style:italic;'>null</span>
<span class="t" style='left:463.50px;top:341px;font-size:15.3px;color:#605e5c;'>2</span>
<span class="t" style='left:490.90px;top:341px;font-size:13px;letter-spacing:-0.283px;color:#252423;'>C001</span>
<span class="t" style='left:861.50px;top:341px;font-size:13px;letter-spacing:-0.030px;color:#252423;font-style:italic;'>100</span>
<span class="t" style='left:463.50px;top:367px;font-size:15.3px;color:#605e5c;'>3</span>
<span class="t" style='left:490.90px;top:367px;font-size:13px;letter-spacing:-0.283px;color:#252423;'>C001</span>
<span class="t" style='left:861.50px;top:367px;font-size:13px;letter-spacing:0.351px;color:#252423;font-style:italic;'>null</span>
<span class="t" style='left:463.00px;top:394px;font-size:15.3px;color:#605e5c;'>4</span>
<span class="t" style='left:490.90px;top:394px;font-size:13px;letter-spacing:-0.283px;color:#252423;'>C002</span>
<span class="t" style='left:861.50px;top:394px;font-size:13px;letter-spacing:0.351px;color:#252423;font-style:italic;'>null</span>
<span class="t" style='left:463.50px;top:420px;font-size:15.3px;color:#605e5c;'>5</span>
<span class="t" style='left:490.90px;top:420px;font-size:13px;letter-spacing:-0.283px;color:#252423;'>C002</span>
<span class="t" style='left:861.50px;top:420px;font-size:13px;letter-spacing:0.351px;color:#252423;font-style:italic;'>null</span>
<span class="t" style='left:463.50px;top:446px;font-size:15.3px;color:#605e5c;'>6</span>
<span class="t" style='left:490.90px;top:446px;font-size:13px;letter-spacing:-0.283px;color:#252423;'>C002</span>
<span class="t" style='left:861.50px;top:446px;font-size:13px;letter-spacing:0.470px;color:#252423;font-style:italic;'>499</span>
<span class="t" style='left:463.50px;top:473px;font-size:15.3px;color:#605e5c;'>7</span>
<span class="t" style='left:490.90px;top:473px;font-size:13px;letter-spacing:-0.283px;color:#252423;'>C002</span>
<span class="t" style='left:861.50px;top:473px;font-size:13px;letter-spacing:0.351px;color:#252423;font-style:italic;'>null</span>
<span class="t" style='left:463.50px;top:499px;font-size:15.3px;color:#605e5c;'>8</span>
<span class="t" style='left:490.90px;top:499px;font-size:13px;letter-spacing:-0.283px;color:#252423;'>C002</span>
<span class="t" style='left:861.50px;top:499px;font-size:13px;letter-spacing:0.470px;color:#252423;font-style:italic;'>599</span>
<span class="t" style='left:463.50px;top:525px;font-size:15.3px;color:#605e5c;'>9</span>
<span class="t" style='left:490.90px;top:525px;font-size:13px;letter-spacing:-0.283px;color:#252423;'>C002</span>
<span class="t" style='left:861.50px;top:525px;font-size:13px;letter-spacing:0.351px;color:#252423;font-style:italic;'>null</span>
<span class="t" style='left:880.90px;top:20px;font-size:11.5px;color:#3e7bbf;'>A</span>
<span class="t" style='left:881.10px;top:29px;font-size:10.8px;color:#6b5b66;'>Z</span>
<span class="t" style='left:881.10px;top:45px;font-size:10.8px;color:#6b5b66;'>Z</span>
<span class="t" style='left:880.90px;top:55px;font-size:11.5px;color:#3e7bbf;'>A</span>
<span class="t" style='left:1026.60px;top:71px;font-size:10.5px;color:#3b3a39;'>1</span>
<span class="t" style='left:1038.50px;top:81px;font-size:10.5px;color:#3b3a39;'>2</span>
<span class="t" style='left:556.60px;top:149px;font-size:17.5px;letter-spacing:1.138px;color:#4f4d4c;font-style:italic;font-family:"Liberation Serif", serif;'>fx</span>
</div>
</body>
</html>
